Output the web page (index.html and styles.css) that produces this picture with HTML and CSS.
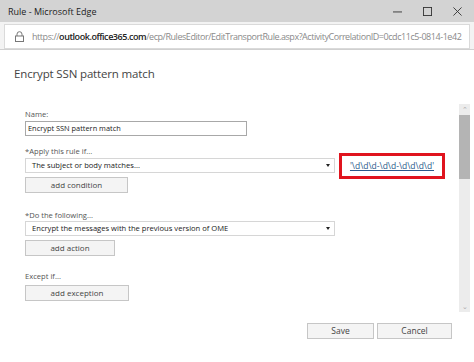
FILE: index.html
```html
<!DOCTYPE html>
<html lang="en">

<head>
    <meta charset="UTF-8" />
    <meta name="viewport" content="width=device-width, initial-scale=1.0" />
    <title>Rule - Microsoft Edge</title>
    <link rel="stylesheet" href="styles.css">
</head>

<body>
    <div class="window">
        <div class="titlebar">
            <span class="title">Rule - Microsoft Edge</span>
            <div class="controls">
                <svg width="10" height="10" viewBox="0 0 10 10"><path d="M0 5.5h10" stroke="#333" stroke-width="1" /></svg>
                <svg width="10" height="10" viewBox="0 0 10 10"><rect x="0.5" y="0.5" width="9" height="9" fill="none" stroke="#333" stroke-width="1" /></svg>
                <svg width="10" height="10" viewBox="0 0 10 10"><path d="M0.5 0.5l9 9M9.5 0.5l-9 9" stroke="#333" stroke-width="1" /></svg>
            </div>
        </div>

        <div class="addressbar">
            <div class="url">
                <svg class="lock" width="9" height="11" viewBox="0 0 9 11">
                    <path d="M2 5V3.2a2.5 2.5 0 0 1 5 0V5" fill="none" stroke="#777" stroke-width="1" />
                    <rect x="0.5" y="5" width="8" height="5.5" fill="none" stroke="#777" stroke-width="1" />
                </svg>
                <span class="url-text">https://<b>outlook.office365.com</b>/ecp/RulesEditor/EditTransportRule.aspx?ActivityCorrelationID=0cdc11c5-0814-1e42</span>
            </div>
        </div>

        <div class="page">
            <h1 class="heading">Encrypt SSN pattern match</h1>

            <div class="content">
                <div class="form">
                    <label class="label">Name:</label>
                    <div class="input">Encrypt SSN pattern match</div>

                    <label class="label label-apply">*Apply this rule if...</label>
                    <div class="select-row">
                        <div class="select">The subject or body matches...<span class="arrow"></span></div>
                        <div class="highlight"><a href="#" class="pattern">'\d\d\d-\d\d-\d\d\d\d'</a></div>
                    </div>
                    <button class="btn btn-condition">add condition</button>

                    <label class="label label-do">*Do the following...</label>
                    <div class="select">Encrypt the messages with the previous version of OME<span class="arrow"></span></div>
                    <button class="btn btn-action">add action</button>

                    <label class="label label-except">Except if...</label>
                    <button class="btn btn-exception">add exception</button>
                </div>

                <div class="scrollbar">
                    <span class="scroll-arrow">&#x2303;</span>
                    <div class="thumb"></div>
                    <span class="scroll-arrow down">&#x2304;</span>
                </div>
            </div>

            <div class="footer">
                <button class="btn btn-save">Save</button>
                <button class="btn btn-cancel">Cancel</button>
            </div>
        </div>
    </div>
</body>

</html>
```

FILE: styles.css
```css
body {
    margin: 0;
    font-family: "Open Sans", "Noto Sans", sans-serif;
    color: #333;
    background-color: #fff;
}

.window {
    width: 474px;
    height: 362px;
    display: flex;
    flex-direction: column;
    overflow: hidden;
}

.titlebar {
    height: 22px;
    background-color: #d3d3d3;
    display: flex;
    align-items: center;
    justify-content: space-between;
    padding-left: 8px;
}

.title {
    font-size: 9px;
    color: #222;
}

.controls {
    display: flex;
    gap: 21px;
    padding-right: 12px;
}

.controls svg {
    width: 9px;
    height: 9px;
}

.addressbar {
    height: 28px;
    background-color: #f3f3f3;
    border-bottom: 1px solid #d0d0d0;
    padding: 2px 4px 0 4px;
    box-sizing: border-box;
}

.url {
    height: 23px;
    background-color: #fff;
    border: 1px solid #dadada;
    display: flex;
    align-items: center;
    padding-left: 10px;
    white-space: nowrap;
    overflow: hidden;
}

.lock {
    flex-shrink: 0;
    margin-right: 8px;
}

.url-text {
    font-size: 9px;
    color: #8a8a8a;
    letter-spacing: -0.45px;
}

.url-text b {
    color: #222;
    font-weight: 600;
}

.page {
    flex: 1;
    display: flex;
    flex-direction: column;
}

.heading {
    margin: 0;
    padding: 14px 0 0 14px;
    font-size: 11.5px;
    line-height: 20px;
    font-weight: 400;
    color: #444;
    letter-spacing: -0.15px;
}

.content {
    display: flex;
    margin-top: 20px;
    height: 208px;
}

.form {
    flex: 1;
    display: flex;
    flex-direction: column;
    align-items: flex-start;
    padding: 4px 0 0 25px;
}

.label {
    font-size: 7.6px;
    line-height: 12px;
    color: #555;
}

.input {
    width: 218px;
    height: 13px;
    margin-top: 1px;
    border: 1px solid #a8a8a8;
    font-size: 7.4px;
    line-height: 13px;
    padding-left: 2px;
    color: #222;
}

.label-apply {
    margin-top: 9px;
}

.select-row {
    display: flex;
    align-items: center;
    margin-top: 1px;
}

.select {
    position: relative;
    width: 302px;
    height: 13px;
    border: 1px solid #d6d6d6;
    font-size: 7.6px;
    line-height: 13px;
    padding-left: 6px;
    color: #222;
}

.arrow {
    position: absolute;
    right: 4px;
    top: 5px;
    border-left: 2.5px solid transparent;
    border-right: 2.5px solid transparent;
    border-top: 3px solid #222;
}

.highlight {
    width: 100px;
    height: 20px;
    margin: -6px 0 -6px 4px;
    border: 3px solid #e0141e;
    display: flex;
    align-items: center;
    justify-content: center;
}

.pattern {
    font-size: 8.5px;
    color: #2a5a8c;
    text-decoration: underline;
}

.btn {
    background-color: #f4f4f4;
    border: 1px solid #c6c6c6;
    font-family: "Open Sans", "Noto Sans", sans-serif;
    font-size: 8px;
    color: #444;
    padding: 0;
    height: 16px;
    line-height: 14px;
}

.btn-condition {
    width: 103px;
    margin-top: 4px;
}

.label-do {
    margin-top: 16px;
}

.btn-action {
    width: 90px;
    margin-top: 4px;
}

.label-except {
    margin-top: 14px;
}

.btn-exception {
    width: 104px;
    margin-top: 3px;
}

.scrollbar {
    width: 11px;
    margin-right: 4px;
    background-color: #ececec;
    display: flex;
    flex-direction: column;
    align-items: center;
}

.scroll-arrow {
    font-size: 7px;
    line-height: 11px;
    height: 11px;
    color: #aaa;
}

.thumb {
    width: 11px;
    height: 64px;
    background-color: #b4b4b4;
}

.scroll-arrow.down {
    margin-top: auto;
}

.footer {
    display: flex;
    justify-content: flex-end;
    gap: 3px;
    padding-right: 22px;
    margin-top: 11px;
}

.btn-save {
    width: 67px;
    font-size: 8.5px;
}

.btn-cancel {
    width: 75px;
    font-size: 8.5px;
}
```
